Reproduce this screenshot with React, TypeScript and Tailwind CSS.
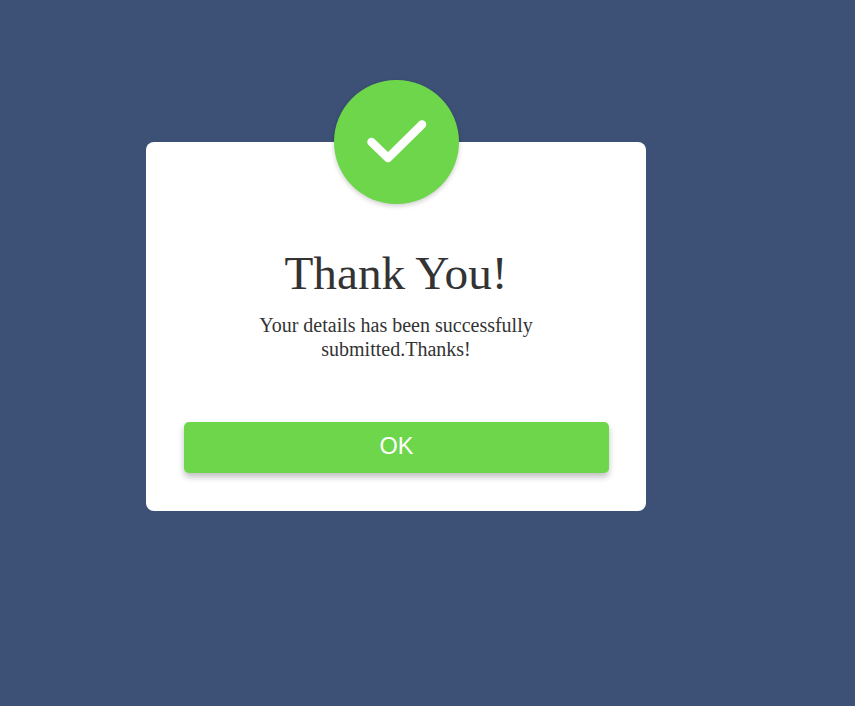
export default function App() {
  return (
    <div className="min-h-[706px] w-full bg-[#3d5176] pt-[80px] pl-[146px]">
      <div className="relative w-[500px] h-[369px] mt-[61.5px] bg-white rounded-[8px] flex flex-col items-center pt-[104px] px-[38px] font-['Liberation_Serif',serif] text-[#333333]">
        <div className="absolute top-[-61.5px] left-[188px] w-[125px] h-[124px] rounded-full bg-[#6dd64a] shadow-[0_2px_5px_rgba(0,0,0,0.2)] flex items-center justify-center">
          <svg width="60" height="44" viewBox="0 0 60 44" fill="none" stroke="white" strokeWidth="8.5" strokeLinecap="round" strokeLinejoin="round">
            <path d="M4.5 22 L21 38 L55 4.5" />
          </svg>
        </div>
        <h4 className="text-[47.25px] leading-[55px] font-normal m-0">Thank You!</h4>
        <p className="text-[20px] leading-[24px] text-center mt-[12px] w-[300px]">Your details has been successfully submitted.Thanks!</p>
        <button className="mt-[61px] ml-[1px] w-[425px] shrink-0 h-[51px] rounded-[5px] bg-[#6dd64a] text-white text-[23.5px] font-['Liberation_Sans',sans-serif] shadow-[0_4px_6px_rgba(0,0,0,0.25)]">OK</button>
      </div>
    </div>
  );
}
